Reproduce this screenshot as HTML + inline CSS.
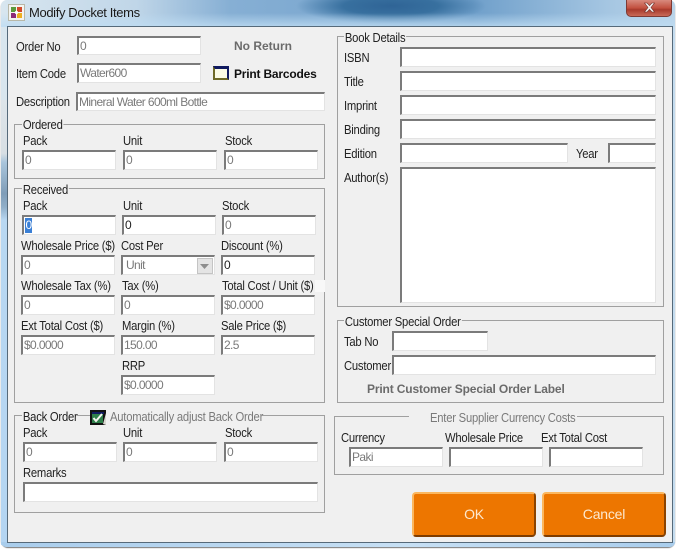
<!DOCTYPE html>
<html><head><meta charset="utf-8"><title>Modify Docket Items</title>
<style>
html,body{margin:0;padding:0;background:#fff}
#w{position:relative;width:677px;height:550px;overflow:hidden;background:#fff;font:12px/14px "Liberation Sans",sans-serif;color:#222}
#w div,#w span,#w svg{position:absolute}
#frame{left:1px;top:0;width:674px;height:547px;border-radius:6px 6px 7px 7px;background:linear-gradient(90deg,#d9e6ee 0,#c5d9e8 100%);box-shadow:0 1px 1px #777}
#title{left:1px;top:0;width:674px;height:27px;border-radius:6px 6px 0 0;background:radial-gradient(ellipse 95px 18px at 390px 6px,#2f6496 0,#38709f 50%,rgba(90,140,190,0) 100%),linear-gradient(90deg,#d8e6ef 0,#c0d6e8 20%,#86afd4 34%,#6f9fca 70%,#a5c6e2 90%,#b9d3e8 100%)}
#titlefade{left:1px;top:13px;width:674px;height:14px;background:linear-gradient(180deg,rgba(190,218,240,0),rgba(190,220,242,.85))}
#leftb{left:1px;top:100px;width:6px;height:445px;background:linear-gradient(180deg,#dde4e9 0,#d8dfe4 12%,#a9c5dc 14%,#7f9db8 21%,#90aec8 24%,#b9d8f2 27%,#b4d5f2 100%)}
#rightb{left:672px;top:27px;width:3px;height:516px;background:#c4dcef}
#botb{left:1px;top:542px;width:674px;height:5px;background:linear-gradient(90deg,#a9cdec,#c7e0f4 60%,#a9cdec);border-radius:0 0 7px 7px}
#client{left:7px;top:26px;width:664px;height:515px;background:#f0f0f0;border:1px solid #566a7a}
.g{border:1px solid #a0a0a0;box-sizing:border-box}
.l,.lg{white-space:nowrap;letter-spacing:-.25px;height:14px;font-size:12.5px;transform:scaleX(.9);transform-origin:0 0}
.lg{background:#f0f0f0;padding:0 1px}
.i{box-sizing:border-box;background:#fff;border-top:2px solid #7b7b7b;border-left:2px solid #7b7b7b;border-right:1px solid #e3e3e3;border-bottom:1px solid #e3e3e3;color:#7a7a7a;padding-left:1px;line-height:17px;font-size:12px;white-space:nowrap;letter-spacing:-.62px}
.a{color:#222}
.b{font-weight:bold;white-space:nowrap;height:14px;font-size:12px}
.btn{box-sizing:border-box;background:#ed7600;border-radius:4px;border-top:2px solid #fbb75f;border-left:2px solid #fbb75f;border-right:2px solid #8a4300;border-bottom:2px solid #7e3c00;color:#fde9cf;text-align:center;font-size:14px;line-height:41px;letter-spacing:-.2px}
</style></head><body>
<div id="w">
<div id="frame"></div>
<div id="title"></div>
<div id="titlefade"></div>
<div id="leftb"></div>
<div id="rightb"></div>
<div id="botb"></div>
<div id="client"></div>

<svg style="left:8px;top:4px" width="17" height="17" viewBox="0 0 17 17"><rect x="0.5" y="0.5" width="16" height="16" fill="#f4f4f0" stroke="#b8b8a8"/><path d="M3 3h5v5H3z" fill="#5b9a3c"/><path d="M9 3h5v5H9z" fill="#d24a2a"/><path d="M3 9h5v5H3z" fill="#8c2a78"/><path d="M9 9h5v5H9z" fill="#eeb020"/><circle cx="8.500" cy="8.500" r="1.600" fill="#fff"/></svg>
<span style="left:29px;top:5px;font-size:13px;line-height:15px;color:#1a1a1a;letter-spacing:-.37px;white-space:nowrap">Modify Docket Items</span>

<div style="left:626px;top:0;width:46px;height:17px;box-sizing:border-box;border-radius:0 0 5px 5px;border:1px solid #7d3a34;border-top:0;background:linear-gradient(180deg,#d88a7e 0,#c2503f 50%,#a83a2c 60%,#c96a58 100%)"></div>
<svg style="left:642px;top:2px" width="15" height="11" viewBox="0 0 15 11"><path d="M2.500 1h2.600l2.400 2.600L9.900 1h2.600L9 5.500l3.500 4.500H9.900L7.500 7.400 5.100 10H2.500L6 5.500z" fill="#f3eeee" stroke="#6d302a" stroke-width=".6"/></svg>

<!-- Top-left -->
<span class="l" style="left:16px;top:40px">Order No</span>
<div class="i" style="left:77px;top:36px;width:124px;height:19px">0</div>
<span class="b" style="left:234px;top:39px;color:#6b6b6b">No Return</span>
<span class="l" style="left:16px;top:67px">Item Code</span>
<div class="i" style="left:77px;top:63px;width:124px;height:20px">Water600</div>
<div style="left:213px;top:66px;width:16px;height:14px;box-sizing:border-box;border:2px solid #6e6a28;border-top:3px solid #101a60;border-right-color:#101a60;background:#fbfbe6"></div>
<span class="b" style="left:234px;top:67px;color:#111;letter-spacing:-.2px">Print Barcodes</span>
<span class="l" style="left:16px;top:95px">Description</span>
<div class="i" style="left:76px;top:92px;width:249px;height:19px">Mineral Water 600ml Bottle</div>

<!-- Ordered -->
<div class="g" style="left:14px;top:124px;width:311px;height:55px"></div>
<span class="lg" style="left:22px;top:118px">Ordered</span>
<span class="l" style="left:23px;top:134px">Pack</span>
<span class="l" style="left:123px;top:134px">Unit</span>
<span class="l" style="left:225px;top:134px">Stock</span>
<div class="i" style="left:22px;top:150px;width:94px;height:20px">0</div>
<div class="i" style="left:123px;top:150px;width:94px;height:20px">0</div>
<div class="i" style="left:224px;top:150px;width:94px;height:20px">0</div>

<!-- Received -->
<div class="g" style="left:14px;top:188px;width:311px;height:215px"></div>
<span class="lg" style="left:22px;top:183px">Received</span>
<span class="l" style="left:23px;top:199px">Pack</span>
<span class="l" style="left:123px;top:199px">Unit</span>
<span class="l" style="left:222px;top:199px">Stock</span>
<div class="i a" style="left:22px;top:215px;width:94px;height:20px"><span style="left:1px;top:1px;width:7px;height:15px;background:#3a7fd5;color:#fff;line-height:15px;text-align:center">0</span></div>
<div class="i a" style="left:122px;top:215px;width:94px;height:20px">0</div>
<div class="i" style="left:222px;top:215px;width:94px;height:20px">0</div>

<span class="l" style="left:21px;top:239px">Wholesale Price ($)</span>
<span class="l" style="left:121px;top:239px">Cost Per</span>
<span class="l" style="left:221px;top:239px">Discount (%)</span>
<div class="i" style="left:21px;top:255px;width:94px;height:20px">0</div>
<div class="i" style="left:121px;top:255px;width:94px;height:20px;padding-left:3px">Unit</div>
<div style="left:197px;top:258px;width:16px;height:16px;box-sizing:border-box;background:#e4e4e4;border:1px solid #c4c4c4"></div>
<svg style="left:200px;top:264px" width="10" height="5" viewBox="0 0 10 5"><path d="M0 0h9L4.500 5z" fill="#8d8d8d"/></svg>
<div class="i a" style="left:221px;top:255px;width:94px;height:20px">0</div>

<span class="l" style="left:21px;top:279px">Wholesale Tax (%)</span>
<span class="l" style="left:122px;top:279px">Tax (%)</span>
<div style="left:315px;top:280px;width:10px;height:12px;background:#f8f8f8"></div>
<span class="l" style="left:222px;top:279px">Total Cost / Unit ($)</span>
<div class="i" style="left:21px;top:295px;width:94px;height:20px">0</div>
<div class="i" style="left:121px;top:295px;width:94px;height:20px">0</div>
<div class="i" style="left:221px;top:295px;width:94px;height:20px">$0.0000</div>

<span class="l" style="left:21px;top:319px">Ext Total Cost ($)</span>
<span class="l" style="left:122px;top:319px">Margin (%)</span>
<span class="l" style="left:221px;top:319px">Sale Price ($)</span>
<div class="i" style="left:21px;top:335px;width:94px;height:20px">$0.0000</div>
<div class="i" style="left:121px;top:335px;width:94px;height:20px">150.00</div>
<div class="i" style="left:221px;top:335px;width:94px;height:20px">2.5</div>

<span class="l" style="left:122px;top:359px">RRP</span>
<div class="i" style="left:121px;top:375px;width:94px;height:20px">$0.0000</div>

<!-- Back order -->
<div class="g" style="left:14px;top:415px;width:311px;height:98px"></div>
<span class="lg" style="left:22px;top:410px">Back Order</span>
<div style="left:90px;top:410px;width:172px;height:14px;background:#f0f0f0"></div>
<div style="left:77px;top:415px;width:13px;height:1px;background:#a0a0a0"></div>
<svg style="left:90px;top:410px" width="16" height="15" viewBox="0 0 16 15"><rect x="0" y="0" width="16" height="15" fill="#111"/><rect x="2" y="2" width="12" height="2" fill="#101a60"/><rect x="2" y="4" width="11" height="9" fill="#2f7f4a"/><path d="M13 14L16 3v12z" fill="#d8d8d0"/><path d="M3.500 8l2.500 3 6-7" fill="none" stroke="#f4f4ee" stroke-width="2"/></svg>
<span class="l" style="left:110px;top:410px;color:#7a7a7a">Automatically adjust Back Order</span>
<span class="l" style="left:23px;top:426px">Pack</span>
<span class="l" style="left:123px;top:426px">Unit</span>
<span class="l" style="left:225px;top:426px">Stock</span>
<div class="i" style="left:23px;top:442px;width:94px;height:20px">0</div>
<div class="i" style="left:123px;top:442px;width:94px;height:20px">0</div>
<div class="i" style="left:224px;top:442px;width:94px;height:20px">0</div>
<span class="l" style="left:23px;top:466px">Remarks</span>
<div class="i" style="left:23px;top:482px;width:295px;height:20px"></div>

<!-- Book details -->
<div class="g" style="left:337px;top:36px;width:327px;height:271px"></div>
<span class="lg" style="left:344px;top:31px">Book Details</span>
<span class="l" style="left:344px;top:51px">ISBN</span>
<span class="l" style="left:344px;top:75px">Title</span>
<span class="l" style="left:344px;top:99px">Imprint</span>
<span class="l" style="left:344px;top:123px">Binding</span>
<span class="l" style="left:344px;top:147px">Edition</span>
<span class="l" style="left:576px;top:147px">Year</span>
<span class="l" style="left:344px;top:171px">Author(s)</span>
<div class="i" style="left:400px;top:47px;width:256px;height:20px"></div>
<div class="i" style="left:400px;top:71px;width:256px;height:20px"></div>
<div class="i" style="left:400px;top:95px;width:256px;height:20px"></div>
<div class="i" style="left:400px;top:119px;width:256px;height:20px"></div>
<div class="i" style="left:400px;top:143px;width:168px;height:20px"></div>
<div class="i" style="left:608px;top:143px;width:48px;height:20px"></div>
<div class="i" style="left:400px;top:167px;width:256px;height:136px"></div>

<!-- Customer -->
<div class="g" style="left:337px;top:320px;width:327px;height:83px"></div>
<span class="lg" style="left:344px;top:315px">Customer Special Order</span>
<span class="l" style="left:344px;top:335px">Tab No</span>
<span class="l" style="left:344px;top:359px">Customer</span>
<div class="i" style="left:392px;top:331px;width:96px;height:20px"></div>
<div class="i" style="left:392px;top:355px;width:264px;height:20px"></div>
<span class="b" style="left:367px;top:382px;color:#6b6b6b;letter-spacing:-.15px">Print Customer Special Order Label</span>

<!-- Supplier -->
<div class="g" style="left:334px;top:416px;width:330px;height:59px"></div>
<div style="left:409px;top:411px;width:168px;height:12px;background:#f0f0f0"></div>
<span class="l" style="left:430px;top:411px;color:#7a7a7a">Enter Supplier Currency Costs</span>
<span class="l" style="left:341px;top:431px">Currency</span>
<span class="l" style="left:445px;top:431px">Wholesale Price</span>
<span class="l" style="left:541px;top:431px">Ext Total Cost</span>
<div class="i" style="left:349px;top:447px;width:94px;height:20px">Paki</div>
<div class="i" style="left:449px;top:447px;width:94px;height:20px"></div>
<div class="i" style="left:549px;top:447px;width:94px;height:20px"></div>

<!-- Buttons -->
<div class="btn" style="left:412px;top:492px;width:124px;height:45px">OK</div>
<div class="btn" style="left:542px;top:492px;width:124px;height:45px">Cancel</div>
</div>
</body></html>
